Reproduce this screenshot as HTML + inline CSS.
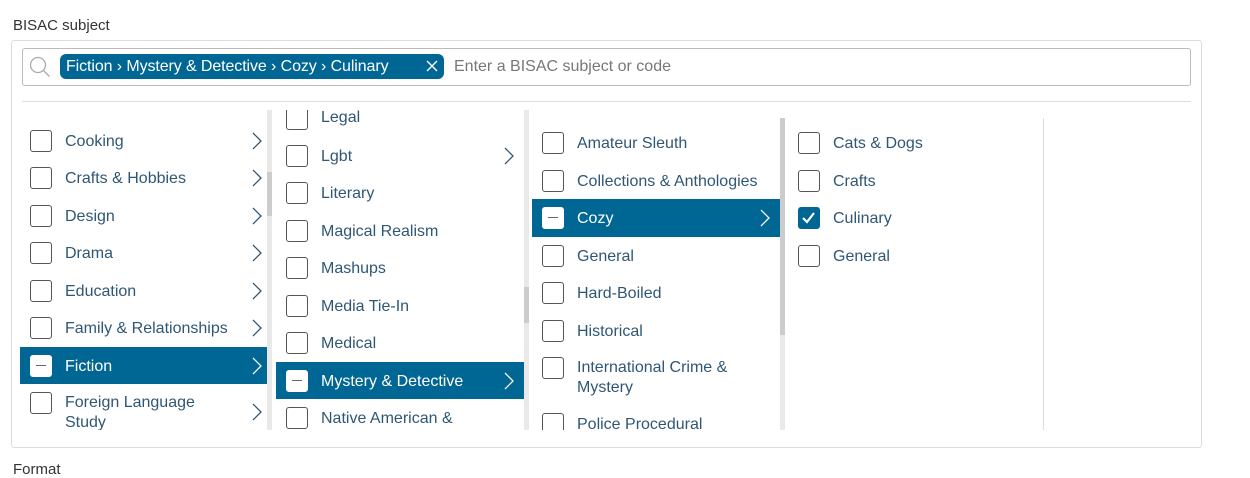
<!DOCTYPE html>
<html><head><meta charset="utf-8"><style>
*{box-sizing:border-box;margin:0;padding:0}
body{width:1250px;height:470px;background:#fff;font-family:"Liberation Sans",sans-serif;position:relative;overflow:hidden;color:#2f5775}
.abs{position:absolute}
.lbl{left:13px;top:17px;font-size:15px;color:#333}
.box{left:11px;top:40px;width:1191px;height:408px;border:1px solid #ddd;border-radius:3px}
.search{left:22px;top:48px;width:1169px;height:38px;border:1px solid #bbb;border-radius:3px}
.chip{left:60px;top:54px;height:25px;width:384px;background:#006693;border-radius:6px;color:#fff;font-size:16px;line-height:25px;padding-left:6px;white-space:nowrap;letter-spacing:-0.1px}
.ph{left:454px;top:58px;font-size:16px;color:#777}
.div{left:22px;top:101px;width:1169px;height:1px;background:#ddd}
.col{top:110px;height:320px;overflow:hidden}
.row{position:absolute;left:0;width:100%;font-size:16px;line-height:20px}
.row.sel{background:#006693;color:#fff}
.cb{position:absolute;left:10px;width:22px;height:22px;border:1.5px solid #555;border-radius:3px;background:#fff}
.sel .cb{border-color:#fff}
.sel .cb:after{content:"";position:absolute;left:5px;top:9px;width:10px;height:1.2px;background:#666}
.t{position:absolute;left:45px}
.ch{position:absolute;right:8px;width:14px;height:20px}
.sb{position:absolute;width:5px;background:#e9e9e9}
.th{position:absolute;width:5px;background:#ccc}
</style></head><body>
<div class="abs lbl">BISAC subject</div>
<div class="abs box"></div>
<div class="abs search"></div>
<svg class="abs" style="left:29px;top:56px" width="22" height="22" viewBox="0 0 22 22"><circle cx="9" cy="9" r="7.5" fill="none" stroke="#aaa" stroke-width="1.3"/><line x1="14.5" y1="14.5" x2="20.5" y2="20.5" stroke="#aaa" stroke-width="1.3"/></svg>
<div class="abs chip">Fiction › Mystery &amp; Detective › Cozy › Culinary <svg style="position:absolute;left:366px;top:6px" width="12" height="12" viewBox="0 0 12 12"><path d="M1 1l10 10M11 1L1 11" stroke="#fff" stroke-width="1.4"/></svg></div>
<div class="abs ph">Enter a BISAC subject or code</div>
<div class="abs div"></div>

<div class="abs col" style="left:20px;width:252px">
 <div class="row" style="top:20px;height:22px"><div class="cb" style="top:0"></div><div class="t" style="top:2px">Cooking</div><svg class="ch" style="top:1px" viewBox="0 0 14 20"><path d="M3 2l8 8-8 8" fill="none" stroke="#2f5775" stroke-width="1.3"/></svg></div>
 <div class="row" style="top:57px;height:22px"><div class="cb" style="top:0"></div><div class="t" style="top:2px">Crafts &amp; Hobbies</div><svg class="ch" style="top:1px" viewBox="0 0 14 20"><path d="M3 2l8 8-8 8" fill="none" stroke="#2f5775" stroke-width="1.3"/></svg></div>
 <div class="row" style="top:95px;height:22px"><div class="cb" style="top:0"></div><div class="t" style="top:2px">Design</div><svg class="ch" style="top:1px" viewBox="0 0 14 20"><path d="M3 2l8 8-8 8" fill="none" stroke="#2f5775" stroke-width="1.3"/></svg></div>
 <div class="row" style="top:132px;height:22px"><div class="cb" style="top:0"></div><div class="t" style="top:2px">Drama</div><svg class="ch" style="top:1px" viewBox="0 0 14 20"><path d="M3 2l8 8-8 8" fill="none" stroke="#2f5775" stroke-width="1.3"/></svg></div>
 <div class="row" style="top:170px;height:22px"><div class="cb" style="top:0"></div><div class="t" style="top:2px">Education</div><svg class="ch" style="top:1px" viewBox="0 0 14 20"><path d="M3 2l8 8-8 8" fill="none" stroke="#2f5775" stroke-width="1.3"/></svg></div>
 <div class="row" style="top:207px;height:22px"><div class="cb" style="top:0"></div><div class="t" style="top:2px">Family &amp; Relationships</div><svg class="ch" style="top:1px" viewBox="0 0 14 20"><path d="M3 2l8 8-8 8" fill="none" stroke="#2f5775" stroke-width="1.3"/></svg></div>
 <div class="row sel" style="top:237px;height:37px"><div class="cb" style="top:8px"></div><div class="t" style="top:10px">Fiction</div><svg class="ch" style="top:9px" viewBox="0 0 14 20"><path d="M3 2l8 8-8 8" fill="none" stroke="#fff" stroke-width="1.3"/></svg></div>
 <div class="row" style="top:282px;height:40px"><div class="cb" style="top:0"></div><div class="t" style="top:1px">Foreign Language<br>Study</div><svg class="ch" style="top:10px" viewBox="0 0 14 20"><path d="M3 2l8 8-8 8" fill="none" stroke="#2f5775" stroke-width="1.3"/></svg></div>
 <div class="sb" style="left:247px;top:0;height:320px"></div><div class="th" style="left:247px;top:62px;height:44px"></div>
</div>

<div class="abs col" style="left:276px;width:253px">
 <div class="row" style="top:-2px;height:22px"><div class="cb" style="top:0"></div><div class="t" style="top:0">Legal</div></div>
 <div class="row" style="top:35px;height:22px"><div class="cb" style="top:0"></div><div class="t" style="top:2px">Lgbt</div><svg class="ch" style="top:1px;right:13px" viewBox="0 0 14 20"><path d="M3 2l8 8-8 8" fill="none" stroke="#2f5775" stroke-width="1.3"/></svg></div>
 <div class="row" style="top:72px;height:22px"><div class="cb" style="top:0"></div><div class="t" style="top:2px">Literary</div></div>
 <div class="row" style="top:110px;height:22px"><div class="cb" style="top:0"></div><div class="t" style="top:2px">Magical Realism</div></div>
 <div class="row" style="top:147px;height:22px"><div class="cb" style="top:0"></div><div class="t" style="top:2px">Mashups</div></div>
 <div class="row" style="top:185px;height:22px"><div class="cb" style="top:0"></div><div class="t" style="top:2px">Media Tie-In</div></div>
 <div class="row" style="top:222px;height:22px"><div class="cb" style="top:0"></div><div class="t" style="top:2px">Medical</div></div>
 <div class="row sel" style="top:252px;height:37px;width:248px"><div class="cb" style="top:8px"></div><div class="t" style="top:10px">Mystery &amp; Detective</div><svg class="ch" style="top:9px" viewBox="0 0 14 20"><path d="M3 2l8 8-8 8" fill="none" stroke="#fff" stroke-width="1.3"/></svg></div>
 <div class="row" style="top:297px;height:22px"><div class="cb" style="top:0"></div><div class="t" style="top:2px">Native American &amp;</div></div>
 <div class="sb" style="left:248px;top:0;height:320px"></div><div class="th" style="left:248px;top:177px;height:36px"></div>
</div>

<div class="abs col" style="left:532px;width:253px">
 <div class="row" style="top:22px;height:22px"><div class="cb" style="top:0"></div><div class="t" style="top:2px">Amateur Sleuth</div></div>
 <div class="row" style="top:60px;height:22px"><div class="cb" style="top:0"></div><div class="t" style="top:2px">Collections &amp; Anthologies</div></div>
 <div class="row sel" style="top:89px;height:38px;width:248px"><div class="cb" style="top:8px"></div><div class="t" style="top:10px">Cozy</div><svg class="ch" style="top:9px" viewBox="0 0 14 20"><path d="M3 2l8 8-8 8" fill="none" stroke="#fff" stroke-width="1.3"/></svg></div>
 <div class="row" style="top:135px;height:22px"><div class="cb" style="top:0"></div><div class="t" style="top:2px">General</div></div>
 <div class="row" style="top:172px;height:22px"><div class="cb" style="top:0"></div><div class="t" style="top:2px">Hard-Boiled</div></div>
 <div class="row" style="top:210px;height:22px"><div class="cb" style="top:0"></div><div class="t" style="top:2px">Historical</div></div>
 <div class="row" style="top:247px;height:40px"><div class="cb" style="top:0"></div><div class="t" style="top:1px">International Crime &amp;<br>Mystery</div></div>
 <div class="row" style="top:303px;height:22px"><div class="cb" style="top:0"></div><div class="t" style="top:2px">Police Procedural</div></div>
 <div class="sb" style="left:248px;top:8px;height:312px"></div><div class="th" style="left:248px;top:8px;height:217px"></div>
</div>

<div class="abs col" style="left:788px;width:256px">
 <div class="row" style="top:22px;height:22px"><div class="cb" style="top:0"></div><div class="t" style="top:2px">Cats &amp; Dogs</div></div>
 <div class="row" style="top:60px;height:22px"><div class="cb" style="top:0"></div><div class="t" style="top:2px">Crafts</div></div>
 <div class="row" style="top:97px;height:22px"><div class="cb" style="top:0;background:#006693;border-color:#006693"><svg width="19" height="19" viewBox="0 0 19 19" style="position:absolute;left:0;top:0"><path d="M4 10l4 4 7-9" fill="none" stroke="#fff" stroke-width="2.2"/></svg></div><div class="t" style="top:2px">Culinary</div></div>
 <div class="row" style="top:135px;height:22px"><div class="cb" style="top:0"></div><div class="t" style="top:2px">General</div></div>
 <div class="abs" style="left:255px;top:8px;width:1px;height:312px;background:#ddd"></div>
</div>
<div class="abs" style="left:13px;top:461px;font-size:15px;color:#333">Format</div>
</body></html>
